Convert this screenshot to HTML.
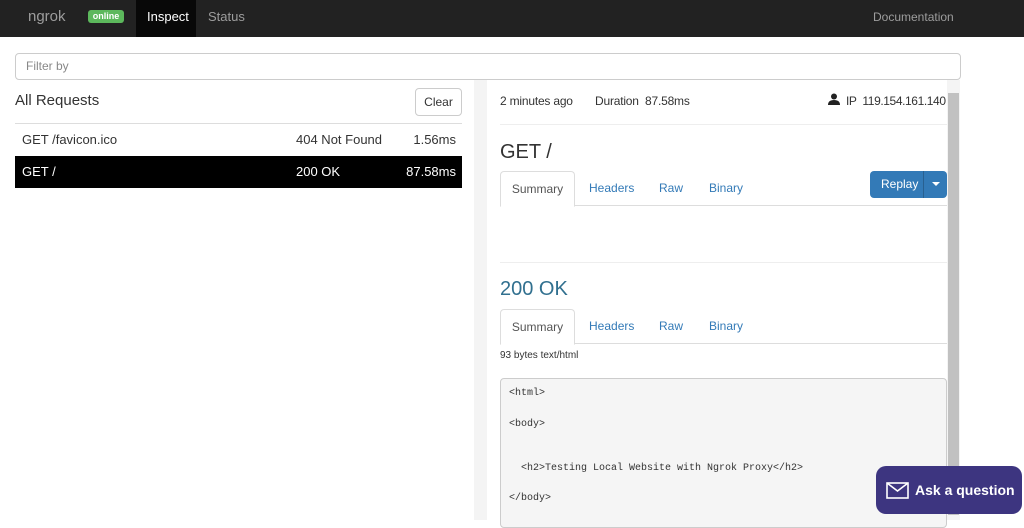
<!DOCTYPE html>
<html><head><meta charset="utf-8"><style>
*{box-sizing:border-box;margin:0;padding:0}
body{width:1024px;height:520px;overflow:hidden;background:#fff;font-family:"Liberation Sans",sans-serif;color:#333;position:relative;font-size:13px}
.nav{position:absolute;left:0;top:0;width:1024px;height:37px;background:#222}
.nav span{position:absolute;top:9px;color:#9d9d9d;font-size:13px}
.a{position:absolute}
.tabs{position:absolute;left:500px;width:447px;height:35px;border-bottom:1px solid #ddd}
.tabs div{position:absolute;top:0;height:35px;line-height:34px;font-size:12px;color:#337ab7}
.tabs .act{left:0;width:75px;border:1px solid #ddd;border-bottom:1px solid #fff;border-radius:4px 4px 0 0;color:#555;text-align:center;background:#fff;height:36px}
pre{font-family:"Liberation Mono",monospace;font-size:10px;color:#333}
</style></head><body>
<div class="nav">
<span style="left:28px;top:8px;font-size:15px">ngrok</span>
<div class="a" style="left:88px;top:10px;width:36px;height:13px;background:#5cb85c;border-radius:3px;color:#fff;font-size:9px;font-weight:bold;text-align:center;line-height:13px">online</div>
<div class="a" style="left:136px;top:0;width:60px;height:37px;background:#080808"></div>
<span style="left:147px;color:#fff">Inspect</span>
<span style="left:208px">Status</span>
<span style="left:873px;font-size:12px;top:10px">Documentation</span>
</div>
<div class="a" style="left:15px;top:53px;width:946px;height:27px;border:1px solid #ccc;border-radius:4px;padding-left:10px;line-height:25px;color:#888;font-size:12px">Filter by</div>
<div class="a" style="left:15px;top:92px;font-size:15px">All Requests</div>
<div class="a" style="left:415px;top:88px;width:47px;height:28px;border:1px solid #ccc;border-radius:4px;text-align:center;line-height:26px;font-size:12px">Clear</div>
<div class="a" style="left:15px;top:123px;width:447px;height:1px;background:#ddd"></div>
<div class="a" style="left:22px;top:132px;font-size:13px">GET /favicon.ico</div>
<div class="a" style="left:296px;top:132px;font-size:13px">404 Not Found</div>
<div class="a" style="right:568px;top:132px;font-size:13px">1.56ms</div>
<div class="a" style="left:15px;top:156px;width:447px;height:32px;background:#000;color:#fff;font-size:13px">
<span class="a" style="left:7px;top:8px">GET /</span><span class="a" style="left:281px;top:8px">200 OK</span><span class="a" style="right:6px;top:8px">87.58ms</span></div>
<div class="a" style="left:474px;top:80px;width:13px;height:440px;background:#f4f4f4"></div>
<div class="a" style="left:947px;top:80px;width:13px;height:440px;background:#f4f4f4"></div>
<div class="a" style="left:948px;top:93px;width:11px;height:422px;background:#c1c1c1"></div>
<div class="a" style="left:500px;top:94px;font-size:12px;letter-spacing:-0.2px">2 minutes ago</div>
<div class="a" style="left:595px;top:94px;font-size:12px;letter-spacing:-0.2px">Duration&nbsp; 87.58ms</div>
<svg class="a" style="left:828px;top:93px" width="12" height="12" viewBox="0 0 12 12"><circle cx="6" cy="3.5" r="3" fill="#222"/><path d="M0 12 Q0 7 6 7 Q12 7 12 12Z" fill="#222"/></svg>
<div class="a" style="left:846px;top:94px;font-size:12px;letter-spacing:-0.4px">IP&nbsp; 119.154.161.140</div>
<div class="a" style="left:500px;top:124px;width:447px;height:1px;background:#eee"></div>
<div class="a" style="left:500px;top:141px;font-size:20px">GET /</div>
<div class="tabs" style="top:171px"><div class="act">Summary</div><div style="left:89px">Headers</div><div style="left:159px">Raw</div><div style="left:209px">Binary</div></div>
<div class="a" style="left:870px;top:171px;width:77px;height:27px;background:#337ab7;border-radius:4px;color:#fff;font-size:12px;line-height:27px;padding-left:11px">Replay<span class="a" style="left:53px;top:0;width:1px;height:27px;background:#286090"></span><span class="a" style="left:62px;top:11px;border:4px solid transparent;border-top-color:#fff;border-bottom:0"></span></div>
<div class="a" style="left:500px;top:262px;width:447px;height:1px;background:#eee"></div>
<div class="a" style="left:500px;top:278px;font-size:20px;color:#31708f">200 OK</div>
<div class="tabs" style="top:309px"><div class="act">Summary</div><div style="left:89px">Headers</div><div style="left:159px">Raw</div><div style="left:209px">Binary</div></div>
<div class="a" style="left:500px;top:350px;font-size:10px">93 bytes text/html</div>
<div class="a" style="left:500px;top:378px;width:447px;height:150px;background:#f5f5f5;border:1px solid #ccc;border-radius:4px"></div>
<pre class="a" style="left:509px;top:388px">&lt;html&gt;</pre>
<pre class="a" style="left:509px;top:419px">&lt;body&gt;</pre>
<pre class="a" style="left:521px;top:463px">&lt;h2&gt;Testing Local Website with Ngrok Proxy&lt;/h2&gt;</pre>
<pre class="a" style="left:509px;top:493px">&lt;/body&gt;</pre>
<div class="a" style="left:876px;top:466px;width:146px;height:48px;background:#3d3580;border-radius:10px;color:#fff;font-weight:bold;font-size:14px;line-height:48px;padding-left:39px">Ask a question</div>
<svg class="a" style="left:886px;top:482px" width="23" height="17" viewBox="0 0 23 17"><rect x="1" y="1" width="21" height="15" fill="none" stroke="#fff" stroke-width="1.6"/><path d="M1 1 L11.5 9 L22 1" fill="none" stroke="#fff" stroke-width="1.6"/></svg>
</body></html>
